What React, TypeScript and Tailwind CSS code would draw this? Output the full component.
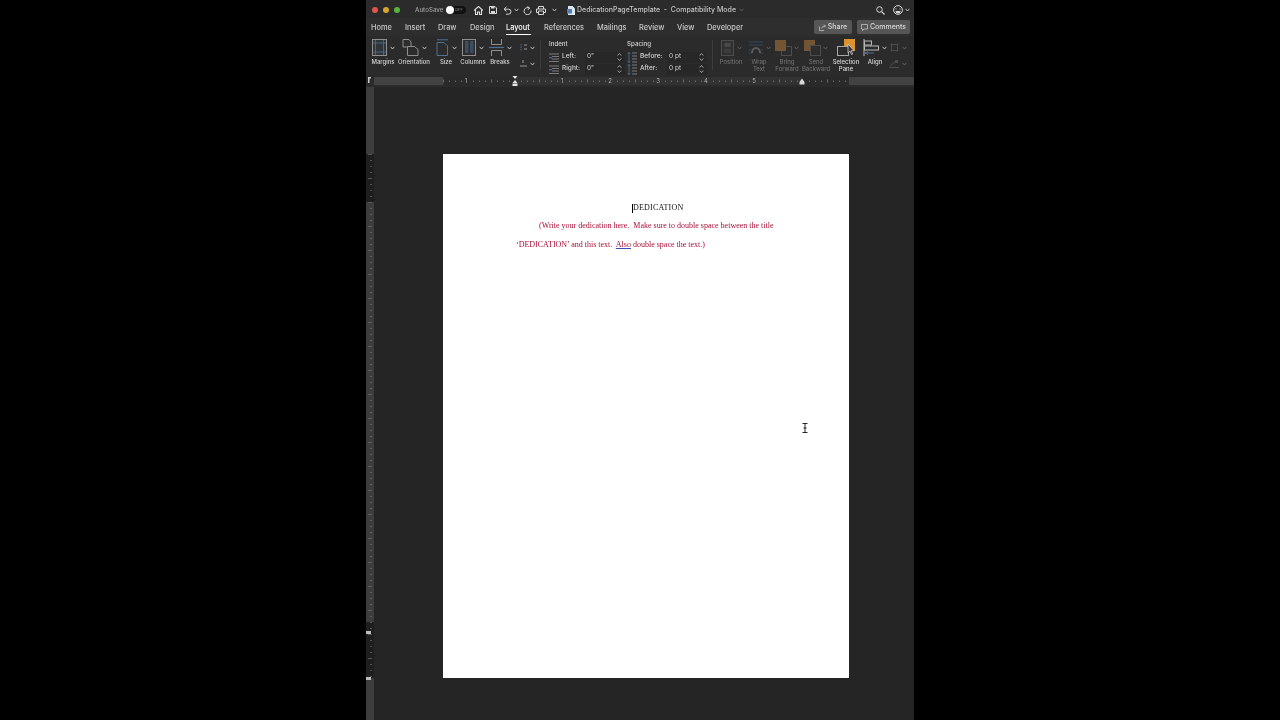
import { ReactNode } from "react"

const font = { fontFamily: "Inter, 'Liberation Sans', sans-serif" }

const tabs = [
  { name: "Home", w: "w-[34px]" },
  { name: "Insert", w: "w-[33px]" },
  { name: "Draw", w: "w-[32px]" },
  { name: "Design", w: "w-[36px]" },
  { name: "Layout", w: "w-[38px]" },
  { name: "References", w: "w-[53px]" },
  { name: "Mailings", w: "w-[42px]" },
  { name: "Review", w: "w-[38px]" },
  { name: "View", w: "w-[30px]" },
  { name: "Developer", w: "w-[50px]" },
]

function Chevron({ dim }: { dim?: boolean }) {
  return (
    <svg width="5" height="4" viewBox="0 0 5 4" className="shrink-0">
      <path d="M.6.8 2.5 3 4.4.8" fill="none" stroke={dim ? "#666" : "#cfcfcf"} strokeWidth=".9" />
    </svg>
  )
}

function Spinner() {
  return (
    <svg width="5" height="10" viewBox="0 0 5 10" className="shrink-0">
      <path d="M.7 3.5 2.5 1.5 4.3 3.5M.7 6.5 2.5 8.5 4.3 6.5" fill="none" stroke="#bdbdbd" strokeWidth=".8" />
    </svg>
  )
}

function ToolButton({ label, w, icon, chevron, dim, gap }: {
  label: string[]
  w: string
  icon: ReactNode
  chevron?: boolean
  dim?: boolean
  gap?: string
}) {
  return (
    <div className={`${w} shrink-0 flex flex-col items-center`}>
      <div className={`h-[19px] flex items-center ${gap ?? "gap-[3px]"}`}>
        {icon}
        {chevron && <Chevron dim={dim} />}
      </div>
      <div className={`mt-[1px] text-center text-[6px] leading-[7px] whitespace-nowrap ${dim ? "text-[#777]" : "font-medium text-[#d4d4d4]"}`}>
        {label.map((l) => <div key={l}>{l}</div>)}
      </div>
    </div>
  )
}

const blue = "#4f7196"
const grey = "#8f8f8f"

const IconMargins = (
  <svg width="15" height="17" viewBox="0 0 15 17">
    <rect x=".5" y=".5" width="14" height="16" fill="#30353a" stroke={grey} />
    <path d="M3.5 1v15M11.5 1v15M1 4h13M1 13h13" stroke={blue} strokeWidth=".8" />
  </svg>
)
const IconOrientation = (
  <svg width="17" height="17" viewBox="0 0 17 17">
    <path d="M1 .5h6l2 2.5v5H1z" fill="#2c2c2c" stroke={grey} />
    <path d="M5.5 7.5h7l3.5 3v6H5.5z" fill="#2c2c2c" stroke={grey} />
  </svg>
)
const IconSize = (
  <svg width="13" height="17" viewBox="0 0 13 17">
    <path d="M1 .8h11" stroke={blue} />
    <path d="M1 3.5h7l3.5 3.5v9.500H1z" fill="#2c2c2c" stroke={blue} />
  </svg>
)
const IconColumns = (
  <svg width="14" height="17" viewBox="0 0 14 17">
    <rect x=".5" y=".5" width="13" height="16" fill="#2c2c2c" stroke={grey} />
    <path d="M3 3h3.500M3 5h3.500M3 7h3.500M3 9h3.500M3 11h3.500M3 13h3.500M8 3h3.500M8 5h3.500M8 7h3.500M8 9h3.500M8 11h3.500M8 13h3.500" stroke={blue} strokeWidth="1" />
  </svg>
)
const IconBreaks = (
  <svg width="15" height="17" viewBox="0 0 15 17">
    <path d="M2.500 0v5.500h10V0M2.500 17v-5.500h10V17" fill="none" stroke={grey} />
    <path d="M0 8.500h15" stroke={blue} strokeWidth="1.200" />
  </svg>
)
const IconPosition = (
  <svg width="13" height="16" viewBox="0 0 13 16">
    <rect x=".5" y=".5" width="12" height="15" fill="#303030" stroke="#4c4c4c" />
    <rect x="3.500" y="3" width="6" height="4" fill="#4a4a4a" />
    <path d="M3 10h7M3 12h7" stroke="#4a4a4a" />
  </svg>
)
const IconWrap = (
  <svg width="16" height="15" viewBox="0 0 16 15">
    <path d="M1 2h14M1 5h14M1 13h3M12 13h3M1 10h2M13 10h2" stroke="#37465a" />
    <path d="M4 13a4 5 0 0 1 8 0" fill="none" stroke="#5c5c5c" strokeWidth="2" />
  </svg>
)
const IconForward = (
  <svg width="17" height="16" viewBox="0 0 17 16">
    <rect x="6.500" y="6.500" width="10" height="9" fill="#2c2c2c" stroke="#4c4c4c" />
    <rect x="0" y="0" width="11" height="11" fill="#735534" />
  </svg>
)
const IconBackward = (
  <svg width="17" height="16" viewBox="0 0 17 16">
    <rect x="0" y="0" width="11" height="11" fill="#735534" />
    <rect x="6.500" y="5.500" width="10" height="10" fill="#2c2c2c" stroke="#4c4c4c" />
  </svg>
)
const IconSelection = (
  <svg width="19" height="19" viewBox="0 0 19 19">
    <rect x="7" y="1" width="11" height="12" fill="#dd9230" />
    <rect x=".5" y="8.500" width="11" height="9" fill="#2c2c2c" stroke="#a8a8a8" />
    <path d="M11 6v9l2-2 1.500 3.500 1.200-.5-1.500-3.300h2.800z" fill="#333" stroke="#d8d8d8" strokeWidth=".7" />
  </svg>
)
const IconAlign = (
  <svg width="16" height="17" viewBox="0 0 16 17">
    <path d="M1 0v17" stroke="#b8b8b8" />
    <rect x="1.500" y="2" width="7" height="4" fill="none" stroke="#b8b8b8" />
    <rect x="1.500" y="7" width="14" height="4" fill="none" stroke="#b8b8b8" />
    <path d="M2 14h9M2 14l3-1.500M2 14l3 1.500" stroke={blue} fill="none" />
  </svg>
)

function FieldRow({ icon, label, value, lw, fw }: { icon: ReactNode; label: string; value: string; lw: string; fw: string }) {
  return (
    <div className="h-[12px] flex items-center">
      {icon}
      <span className={`${lw} text-[6.500px] font-medium text-[#d4d4d4]`}>{label}</span>
      <div className={`${fw} h-[11px] flex items-center justify-between pl-[2px] pr-[3px] bg-[#272727] text-[6.500px] text-[#d4d4d4]`}>
        <span>{value}</span>
        <Spinner />
      </div>
    </div>
  )
}

const LinesIcon = (
  <svg width="10" height="9" viewBox="0 0 10 9" className="mr-[3px] shrink-0">
    <path d="M0 1h10M3 3.500h7M3 6h7M0 8.500h10" stroke="#8f8f8f" strokeWidth=".8" />
    <path d="M0 4.700h3" stroke={blue} strokeWidth="1.200" />
  </svg>
)
const SpaceIcon = (
  <svg width="10" height="11" viewBox="0 0 10 11" className="mr-[3px] shrink-0">
    <path d="M5 1h5M5 4h5M5 7h5M5 10h5" stroke="#8f8f8f" strokeWidth=".8" />
    <path d="M2 0v11M.5 2 2 .5 3.500 2M.5 9 2 10.500 3.500 9" stroke={blue} strokeWidth=".8" fill="none" />
  </svg>
)

function SmallColumn({ top, bottom, dim }: { top: ReactNode; bottom: ReactNode; dim?: boolean }) {
  return (
    <div className="flex flex-col items-center gap-[7px] pt-[5px]">
      <div className="flex items-center gap-[3px]">{top}<Chevron dim={dim} /></div>
      <div className="flex items-center gap-[3px]">{bottom}<Chevron dim={dim} /></div>
    </div>
  )
}

function HorizontalRuler() {
  const ticks: number[] = []
  for (let x = 77; x < 483; x += 6) {
    if ((x - 77) % 48 !== 24 || x === 0) ticks.push(x)
  }
  const nums = [
    { n: "1", x: 100 }, { n: "1", x: 196 }, { n: "2", x: 244 },
    { n: "3", x: 292 }, { n: "4", x: 340 }, { n: "5", x: 388 },
  ]
  return (
    <svg width="548" height="12" viewBox="0 0 548 12" className="block">
      <rect width="548" height="12" fill="#2a2a2a" />
      <rect x="8" y="2" width="69" height="8" fill="#424242" />
      <rect x="149" y="2" width="287" height="8" fill="#323232" />
      <rect x="483" y="2" width="65" height="8" fill="#424242" />
      {ticks.map((x) => (
        <rect key={x} x={x} y={(x - 77) % 24 === 0 ? 4.500 : 5.500} width=".8" height={(x - 77) % 24 === 0 ? 3 : 1.500} fill="#7c7c7c" />
      ))}
      {nums.map((t) => (
        <text key={t.x} x={t.x} y="7.500" fontSize="6" fill="#b0b0b0" textAnchor="middle" fontFamily="Inter">{t.n}</text>
      ))}
      <path d="M2 2h3v1.500H3.500V8H2z" fill="#c8c8c8" />
      <path d="M146.500 1h5l-2.500 3zM146.500 8l2.500-3 2.500 3zM146.500 8.500h5V11h-5z" fill="#e4e4e4" />
      <path d="M433.500 7l2.500-3.500 2.500 3.500v2.500h-5z" fill="#d8d8d8" />
    </svg>
  )
}

function VerticalRuler() {
  const ticks: number[] = []
  for (let y = 67; y < 591; y += 6) ticks.push(y)
  return (
    <svg width="8" height="633" viewBox="0 0 8 633" className="block shrink-0">
      <rect width="8" height="633" fill="#3d3d3d" />
      <rect y="67" width="8" height="48" fill="#1e1e1e" />
      <rect y="535" width="8" height="56" fill="#1e1e1e" />
      {ticks.map((y) => (
        <rect key={y} x={(y - 67) % 24 === 0 ? 2 : 4} y={y} width={(y - 67) % 24 === 0 ? 4 : 2} height=".7" fill="#6e6e6e" />
      ))}
      <rect x="0" y="544" width="5" height="3" fill="#bcbcbc" />
      <rect x="0" y="590" width="5" height="3" fill="#bcbcbc" />
    </svg>
  )
}

export default function App() {
  return (
    <div className="w-[1280px] h-[720px] bg-black flex justify-start overflow-hidden" style={font}>
      <div className="ml-[366px] w-[548px] h-[720px] bg-[#252525] flex flex-col relative blur-[0.3px]">
        {/* title bar */}
        <div className="h-[18px] shrink-0 bg-[#2b2b2b] flex items-center relative pt-[2px]">
          <div className="ml-[6px] flex items-center gap-[5px]">
            <div className="w-[6px] h-[6px] rounded-full bg-[#e0544c]" />
            <div className="w-[6px] h-[6px] rounded-full bg-[#d6a62c]" />
            <div className="w-[6px] h-[6px] rounded-full bg-[#58b23f]" />
          </div>
          <span className="ml-[15px] w-[31px] text-[6.200px] font-medium text-[#a0a0a0]">AutoSave</span>
          <div className="w-[20px] h-[8px] rounded-full bg-[#111] flex items-center">
            <div className="w-[8px] h-[8px] rounded-full bg-white" />
            <span className="ml-[1px] text-[4px] text-[#888]">OFF</span>
          </div>
          <svg width="9" height="9" viewBox="0 0 9 9" className="ml-[8px]">
            <path d="M0 4.500 4.500.5 9 4.500M1.500 4v4.500h2V6h2v2.500h2V4" fill="none" stroke="#e0e0e0" strokeWidth="1.100" />
          </svg>
          <svg width="8" height="8" viewBox="0 0 8 8" className="ml-[6px]">
            <path d="M.5.500h5.500L7.500 2v5.500H.5z" fill="none" stroke="#d8d8d8" />
            <rect x="2" y="5" width="4" height="2.500" fill="#d8d8d8" />
            <rect x="2" y=".5" width="3.500" height="2" fill="#d8d8d8" />
          </svg>
          <svg width="9" height="9" viewBox="0 0 9 9" className="ml-[6px]">
            <path d="M3.500.8 1 3.200l2.500 2.300M1 3.200h4.500a2.500 2.500 0 0 1 0 5H3" fill="none" stroke="#d8d8d8" strokeWidth="1" />
          </svg>
          <div className="ml-[2px]"><Chevron /></div>
          <svg width="9" height="9" viewBox="0 0 9 9" className="ml-[4px]">
            <path d="M6.500 2.200A3.500 3.500 0 1 0 8 4.500M4.500.5l2.300 1.700-2 1.500" fill="none" stroke="#d8d8d8" strokeWidth="1" />
          </svg>
          <svg width="10" height="9" viewBox="0 0 10 9" className="ml-[4px]">
            <path d="M2.500 3V.5h5V3M2.500 6.500H.5V3h9v3.500h-2M2.500 5h5v3.500h-5z" fill="none" stroke="#d8d8d8" />
          </svg>
          <div className="ml-[6px]"><Chevron /></div>
          <svg width="8" height="9" viewBox="0 0 8 9" className="ml-[10px]">
            <path d="M1 0h4.500L8 2.500V9H1z" fill="#dfe6ee" />
            <rect x="0" y="3" width="5" height="4.500" fill="#4f7fb8" />
          </svg>
          <span className="ml-[2px] text-[7px] font-medium text-[#c4c4c4] whitespace-nowrap">
            DedicationPageTemplate&nbsp; -&nbsp; Compatibility Mode
          </span>
          <div className="ml-[3px]"><Chevron dim /></div>
          <div className="absolute right-[4px] top-[5px] flex items-center">
            <svg width="9" height="9" viewBox="0 0 9 9" className="mr-[8px]">
              <circle cx="3.500" cy="3.500" r="2.800" fill="none" stroke="#d8d8d8" />
              <path d="M5.700 5.700 8.500 8.500" stroke="#d8d8d8" strokeWidth="1.200" />
            </svg>
            <svg width="10" height="10" viewBox="0 0 10 10" className="mr-[2px]">
              <circle cx="5" cy="5" r="4.400" fill="none" stroke="#d8d8d8" />
              <path d="M3 3.500v1M7 3.500v1" stroke="#d8d8d8" />
              <path d="M2.500 6h5a2.500 2.500 0 0 1-5 0z" fill="#d8d8d8" />
            </svg>
            <Chevron />
          </div>
        </div>

        {/* tabs */}
        <div className="h-[18px] shrink-0 bg-[#2e2e2e] flex items-center pl-[5px] relative">
          {tabs.map((t) => (
            <div key={t.name} className={`${t.w} h-[18px] pt-[1px] flex items-center relative text-[7.400px] font-medium ${t.name === "Layout" ? "text-white" : "text-[#c8c8c8]"}`}>
              {t.name}
              {t.name === "Layout" && <div className="absolute left-0 bottom-[1px] w-[25px] h-[1px] bg-white" />}
            </div>
          ))}
          <div className="absolute left-[448px] top-[2px] w-[38px] h-[14px] rounded-[2px] bg-[#565656] flex items-center justify-center gap-[2px] text-[7px] font-medium text-[#d8d8d8]">
            <svg width="7" height="7" viewBox="0 0 7 7">
              <path d="M.5 2.500v4h4.500M2.500 4.500C3 2.500 4.500 2 6.500 2M5 .5 6.500 2 5 3.500" fill="none" stroke="#cfcfcf" strokeWidth=".7" />
            </svg>
            Share
          </div>
          <div className="absolute left-[491px] top-[2px] w-[53px] h-[14px] rounded-[2px] bg-[#565656] flex items-center justify-center gap-[2px] text-[7px] font-medium text-[#d8d8d8]">
            <svg width="7" height="7" viewBox="0 0 7 7">
              <path d="M.5.500h6v4.500H3L1.500 6.500V5h-1z" fill="none" stroke="#cfcfcf" strokeWidth=".7" />
            </svg>
            Comments
          </div>
        </div>

        {/* ribbon */}
        <div className="h-[39px] shrink-0 bg-[#2b2b2b] flex pl-[4px] pt-[2px]">
          <ToolButton label={["Margins"]} w="w-[26px]" icon={IconMargins} chevron />
          <ToolButton label={["Orientation"]} w="w-[36px]" icon={IconOrientation} chevron />
          <ToolButton label={["Size"]} w="w-[28px]" icon={IconSize} chevron />
          <ToolButton label={["Columns"]} w="w-[26px]" icon={IconColumns} chevron />
          <ToolButton label={["Breaks"]} w="w-[28px]" icon={IconBreaks} chevron />
          <div className="w-[26px] shrink-0">
            <SmallColumn
              top={<svg width="7" height="9" viewBox="0 0 7 9"><path d="M1 1v7" stroke={blue} strokeDasharray="1.500 1" /><path d="M4 2h3M4 6h3" stroke="#999" /></svg>}
              bottom={<svg width="8" height="9" viewBox="0 0 8 9"><path d="M1 7h7M4 1v3" stroke="#999" /></svg>}
            />
          </div>
          <div className="w-[1px] h-[30px] bg-[#3c3c3c] mt-[2px] mr-[8px]" />
          <div className="w-[78px] shrink-0 mt-[1px]">
            <div className="h-[9px] text-[6.200px] font-medium leading-[9px] text-[#d4d4d4]">Indent</div>
            <div className="mt-[3px]">
              <FieldRow icon={LinesIcon} label="Left:" value={'0"'} lw="w-[23px]" fw="w-[40px]" />
              <FieldRow icon={LinesIcon} label="Right:" value={'0"'} lw="w-[23px]" fw="w-[40px]" />
            </div>
          </div>
          <div className="w-[85px] shrink-0 mt-[1px]">
            <div className="h-[9px] text-[6.200px] font-medium leading-[9px] text-[#d4d4d4]">Spacing</div>
            <div className="mt-[3px]">
              <FieldRow icon={SpaceIcon} label="Before:" value="0 pt" lw="w-[27px]" fw="w-[40px]" />
              <FieldRow icon={SpaceIcon} label="After:" value="0 pt" lw="w-[27px]" fw="w-[40px]" />
            </div>
          </div>
          <div className="w-[1px] h-[30px] bg-[#3c3c3c] mt-[2px] mr-[4px]" />
          <ToolButton label={["Position"]} w="w-[28px]" icon={IconPosition} chevron dim />
          <ToolButton label={["Wrap", "Text"]} w="w-[28px]" icon={IconWrap} chevron dim gap="gap-[2px]" />
          <ToolButton label={["Bring", "Forward"]} w="w-[28px]" icon={IconForward} chevron dim gap="gap-[2px]" />
          <ToolButton label={["Send", "Backward"]} w="w-[30px]" icon={IconBackward} chevron dim gap="gap-[2px]" />
          <ToolButton label={["Selection", "Pane"]} w="w-[30px]" icon={IconSelection} />
          <ToolButton label={["Align"]} w="w-[28px]" icon={IconAlign} chevron />
          <SmallColumn
            dim
            top={<svg width="9" height="9" viewBox="0 0 9 9"><rect x="1.500" y="1.500" width="6" height="6" fill="none" stroke="#4c4c4c" /><path d="M0 1.500h9M0 7.500h9M1.500 0v9M7.500 0v9" stroke="#4c4c4c" strokeWidth=".5" /></svg>}
            bottom={<svg width="10" height="9" viewBox="0 0 10 9"><path d="M0 8.500h10M1 7l6-5" stroke="#4c4c4c" /><rect x="6" y="1" width="3" height="3" fill="#4c4c4c" /></svg>}
          />
        </div>

        {/* horizontal ruler */}
        <HorizontalRuler />

        {/* document area */}
        <div className="flex-1 flex min-h-0">
          <VerticalRuler />
          <div className="flex-1 bg-[#252525] pt-[67px] pl-[69px]">
            <div className="w-[406px] h-[524px] bg-white pt-[45px] pl-[73px] text-[8px] leading-[18.300px] whitespace-pre relative" style={{ fontFamily: "'Liberation Serif', serif" }}>
              <div className="pl-[117px] tracking-[0.2px] text-[#111] relative">
                <span className="absolute left-[116px] top-[5px] w-[1px] h-[9px] bg-black" />
                DEDICATION
              </div>
              <div className="pl-[23px] text-[#a80f38]">(Write your dedication here.  Make sure to double space between the title</div>
              <div className="text-[#a80f38]">
                {"‘DEDICATION’ and this text.  "}
                <span className="underline decoration-[#3b4fb0]">Also</span>
                {" double space the text.)"}
              </div>
            </div>
          </div>
        </div>

        {/* mouse cursor over the page */}
        <svg width="6" height="10" viewBox="0 0 6 10" className="absolute left-[436px] top-[423px]">
          <path d="M.5.500h5M.5 9.500h5M3 .5v9M1.500 5h3" stroke="#111" strokeWidth=".9" fill="none" />
        </svg>
      </div>
    </div>
  )
}
